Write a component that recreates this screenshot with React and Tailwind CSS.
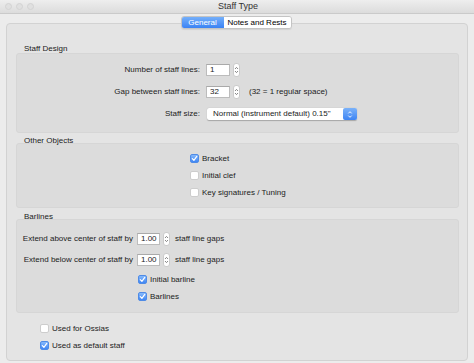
import { useState } from 'react'

function Check({ checked }) {
  return (
    <span
      className={`flex h-[9px] w-[9px] shrink-0 items-center justify-center rounded-[2px] border ${
        checked ? 'border-[#4f8be6] bg-linear-to-b from-[#86b9fb] to-[#3f86f4]' : 'border-[#cdcdcd] bg-white'
      }`}
    >
      {checked && (
        <svg width="7" height="7" viewBox="0 0 7 7">
          <path d="M1.3 3.7 L2.9 5.3 L5.8 1.4" stroke="#fff" strokeWidth="1.2" fill="none" strokeLinecap="round" strokeLinejoin="round" />
        </svg>
      )}
    </span>
  )
}

function Stepper() {
  return (
    <span className="flex h-[14px] w-[7px] shrink-0 items-center justify-center rounded-[3px] border border-[#cbcbcb] bg-white">
      <svg width="5" height="10" viewBox="0 0 5 10">
        <path d="M1 4 L2.5 2.4 L4 4 M1 6 L2.5 7.6 L4 6" stroke="#6a6a6a" strokeWidth="0.8" fill="none" />
      </svg>
    </span>
  )
}

function NumField({ value, w = 'w-[24px]' }) {
  return (
    <span className={`flex h-[12px] ${w} shrink-0 items-center border border-[#bcbcbc] border-t-[#a9a9a9] bg-white pl-[3px] leading-none`}>
      {value}
    </span>
  )
}

function CheckRow({ checked, label, pad = 'pl-[173px]' }) {
  return (
    <div className={`flex h-[17px] items-center gap-[3px] ${pad}`}>
      <Check checked={checked} />
      <span>{label}</span>
    </div>
  )
}

// group title sits right on top of the box edge
function GroupLabel({ text, h, shift }) {
  return (
    <div className={`flex ${h} items-end pl-[8px] leading-[8px]`}>
      <span className={shift}>{text}</span>
    </div>
  )
}

export default function App() {
  const [tab, setTab] = useState('general')

  return (
    <div className="h-[363px] w-[474px] overflow-hidden bg-[#ececec] font-['Liberation_Sans',Arial,sans-serif] text-[8px] text-[#1b1b1b]">
      {/* title bar */}
      <div className="relative flex h-[14px] items-center justify-center border-b border-[#cacaca] bg-linear-to-b from-[#eeeeee] to-[#dcdcdc]">
        <div className="absolute left-[5px] top-[3px] flex gap-[4px]">
          <span className="h-[7px] w-[7px] rounded-full border border-[#d3d3d3] bg-[#e0e0e0]" />
          <span className="h-[7px] w-[7px] rounded-full border border-[#d3d3d3] bg-[#e0e0e0]" />
          <span className="h-[7px] w-[7px] rounded-full border border-[#d3d3d3] bg-[#e0e0e0]" />
        </div>
        <span className="pl-[2px] pt-[1px] text-[9px] text-[#333]">Staff Type</span>
      </div>

      {/* tab view */}
      <div className="ml-[6px] mt-[9px] h-[338px] w-[462px] rounded-[4px] border border-[#d2d2d2] bg-[#e4e4e4] pl-[9px] pr-[8px]">
        <div className="-mt-[8px] flex justify-center pr-[3px]">
          <div className="flex h-[13px] overflow-hidden rounded-[3px] border border-[#c4c4c4] shadow-[0_1px_1px_rgba(0,0,0,0.08)]">
            <button
              onClick={() => setTab('general')}
              className={`flex w-[42px] items-center justify-center leading-none ${
                tab === 'general' ? 'bg-linear-to-b from-[#74affa] to-[#3a82f4] text-white' : 'bg-white text-black'
              }`}
            >
              General
            </button>
            <button
              onClick={() => setTab('notes')}
              className={`flex w-[67px] items-center justify-center leading-none ${
                tab === 'notes' ? 'bg-linear-to-b from-[#74affa] to-[#3a82f4] text-white' : 'bg-white text-black'
              }`}
            >
              Notes and Rests
            </button>
          </div>
        </div>

        <GroupLabel text="Staff Design" h="h-[24px]" shift="translate-y-[0px]" />
        <div className="h-[80px] rounded-[3px] border border-[#d6d6d6] bg-[#dcdcdc] pt-[5px]">
          <div className="flex h-[22px] items-center">
            <span className="w-[183px] text-right">Number of staff lines:</span>
            <span className="ml-[6px]"><NumField value="1" /></span>
            <span className="ml-[3px]"><Stepper /></span>
          </div>
          <div className="flex h-[22px] items-center">
            <span className="w-[183px] text-right">Gap between staff lines:</span>
            <span className="ml-[6px]"><NumField value="32" /></span>
            <span className="ml-[3px]"><Stepper /></span>
            <span className="ml-[9px]">(32 = 1 regular space)</span>
          </div>
          <div className="flex h-[22px] items-center">
            <span className="w-[183px] text-right">Staff size:</span>
            <div className="ml-[7px] flex h-[12px] w-[150px] items-center justify-between rounded-[2px] bg-white pl-[6px] shadow-[0_0.5px_1px_rgba(0,0,0,0.25)]">
              <span className="leading-none">Normal (instrument default) 0.15"</span>
              <span className="flex h-[12px] w-[14px] items-center justify-center rounded-[2px] bg-linear-to-b from-[#7bb2f9] to-[#3d84f3]">
                <svg width="6" height="9" viewBox="0 0 6 9">
                  <path d="M1.3 3.4 L3 1.7 L4.7 3.4 M1.3 5.6 L3 7.3 L4.7 5.6" stroke="#fff" strokeWidth="0.9" fill="none" />
                </svg>
              </span>
            </div>
          </div>
        </div>

        <GroupLabel text="Other Objects" h="h-[10px]" shift="translate-y-[2px]" />
        <div className="h-[65px] rounded-[3px] border border-[#d6d6d6] bg-[#dcdcdc] pt-[6px]">
          <CheckRow checked label="Bracket" />
          <CheckRow label="Initial clef" />
          <CheckRow label="Key signatures / Tuning" />
        </div>

        <GroupLabel text="Barlines" h="h-[11px]" shift="translate-y-[2px]" />
        <div className="h-[94px] rounded-[3px] border border-[#d6d6d6] bg-[#dcdcdc] pt-[8px]">
          <div className="flex h-[21px] items-center">
            <span className="w-[116px] text-right">Extend above center of staff by</span>
            <span className="ml-[4px]"><NumField value="1.00" w="w-[23px]" /></span>
            <span className="ml-[3px]"><Stepper /></span>
            <span className="ml-[5px]">staff line gaps</span>
          </div>
          <div className="flex h-[21px] items-center">
            <span className="w-[116px] text-right">Extend below center of staff by</span>
            <span className="ml-[4px]"><NumField value="1.00" w="w-[23px]" /></span>
            <span className="ml-[3px]"><Stepper /></span>
            <span className="ml-[5px]">staff line gaps</span>
          </div>
          <div className="mt-[1px]">
            <CheckRow checked label="Initial barline" pad="pl-[121px]" />
            <CheckRow checked label="Barlines" pad="pl-[121px]" />
          </div>
        </div>

        <div className="pt-[7px]">
          <CheckRow label="Used for Ossias" pad="pl-[24px]" />
          <CheckRow checked label="Used as default staff" pad="pl-[24px]" />
        </div>
      </div>
    </div>
  )
}
